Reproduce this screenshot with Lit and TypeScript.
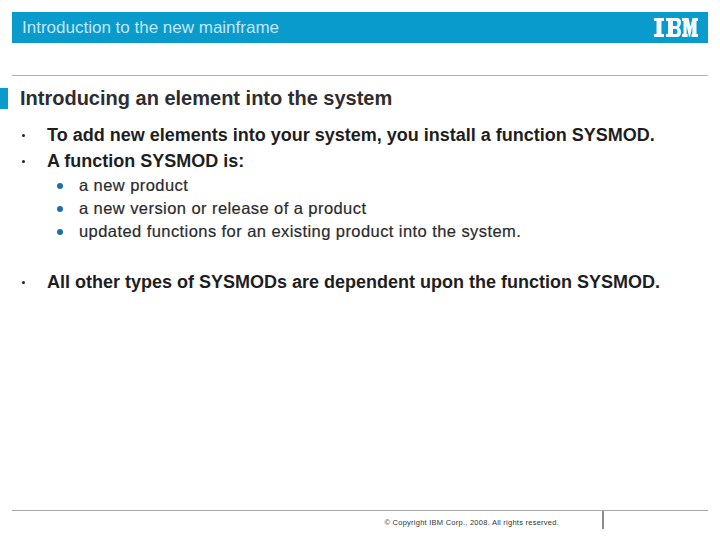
import { LitElement, html, css } from "lit";
import { customElement } from "lit/decorators.js";

@customElement("app-root")
export class AppRoot extends LitElement {
  static styles = css`
    :host { display: block; width: 720px; height: 540px; background: #fff; font-family: "Liberation Sans", Arial, sans-serif; overflow: hidden; }
    .page { display: flex; flex-direction: column; height: 540px; box-sizing: border-box; padding-top: 12px; }
    .banner { margin: 0 12px; height: 31px; background: #0a9bcd; display: flex; align-items: center; justify-content: space-between; padding: 0 10px; box-sizing: border-box; flex: none; }
    .banner-title { color: #c4e6f2; font-size: 17px; font-weight: 400; }
    .logo { display: block; width: 44px; height: 19px; }
    .rule { margin: 32px 12px 0; height: 1px; background: #b4b4b4; flex: none; }
    .heading { display: flex; align-items: stretch; margin-top: 12px; height: 21px; gap: 12px; flex: none; }
    .marker { width: 8px; background: #0a9bcd; flex: none; }
    h1 { margin: 0; font-size: 20px; line-height: 20px; font-weight: 700; color: #2d2d32; }
    .body { flex: 1; padding-top: 13px; }
    .row { display: flex; height: 26px; align-items: center; font-size: 18px; line-height: 24px; font-weight: 700; color: #1e1e22; }
    .dot { width: 3px; height: 3px; border-radius: 50%; background: #222; margin-left: 21.500px; margin-right: 22.500px; flex: none; }
    .sub { margin-bottom: 26px; }
    .sub-row { display: flex; align-items: center; height: 23px; font-size: 16.500px; letter-spacing: 0.43px; color: #2a2a2e; -webkit-text-stroke: 0.2px #2a2a2e; }
    .sub-dot { width: 6px; height: 6px; border-radius: 50%; background: #1a6fb0; margin-left: 57px; margin-right: 16px; flex: none; }
    .footer { margin: 0 12px; border-top: 1px solid #a8a8a8; height: 29px; display: flex; justify-content: flex-end; flex: none; }
    .copy { font-size: 7.500px; color: #333; padding-top: 7px; letter-spacing: 0.25px; margin-right: 43px; }
    .tick { width: 2px; height: 18px; background: #8c8c8c; margin-right: 104px; flex: none; }
  `;

  render() {
    const stripes = [2, 4.400, 6.800, 9.200, 11.600, 14, 16.400];
    return html`
      <div class="page">
        <header class="banner">
          <span class="banner-title">Introduction to the new mainframe</span>
          <svg class="logo" viewBox="0 0 44 19" aria-label="IBM logo">
            <g fill="#f2fafd">
              <path d="M0 0h10v3H7.500v13H10v3H0v-3h2.500V3H0z" />
              <path fill-rule="evenodd" d="M12 0h11q4 0 4 4.500 0 3-2 5 2 1.500 2 4.500 0 5-4 5H12v-3h2V3h-2zM19 3v5h3q1.500 0 1.500-2.500T22 3zM19 11v5h3q1.500 0 1.500-2.500T22 11z" />
              <path d="M28 0h6.500l2 8.500 2-8.500H44v3h-1.500v13H44v3h-6.500v-3h.8v-8L36 19h-1l-2.300-11v8h1v3H28v-3h1.500V3H28z" />
            </g>
            <g fill="#0a9bcd">
              ${stripes.map((y) => html`<rect x="0" y=${y} width="44" height="0.900" />`)}
            </g>
          </svg>
        </header>
        <div class="rule"></div>
        <div class="heading">
          <span class="marker"></span>
          <h1>Introducing an element into the system</h1>
        </div>
        <main class="body">
          <div class="row"><span class="dot"></span>To add new elements into your system, you install a function SYSMOD.</div>
          <div class="row"><span class="dot"></span>A function SYSMOD is:</div>
          <div class="sub">
            <div class="sub-row"><span class="sub-dot"></span>a new product</div>
            <div class="sub-row"><span class="sub-dot"></span>a new version or release of a product</div>
            <div class="sub-row"><span class="sub-dot"></span>updated functions for an existing product into the system.</div>
          </div>
          <div class="row"><span class="dot"></span>All other types of SYSMODs are dependent upon the function SYSMOD.</div>
        </main>
        <footer class="footer">
          <span class="copy">© Copyright IBM Corp., 2008. All rights reserved.</span>
          <span class="tick"></span>
        </footer>
      </div>
    `;
  }
}
